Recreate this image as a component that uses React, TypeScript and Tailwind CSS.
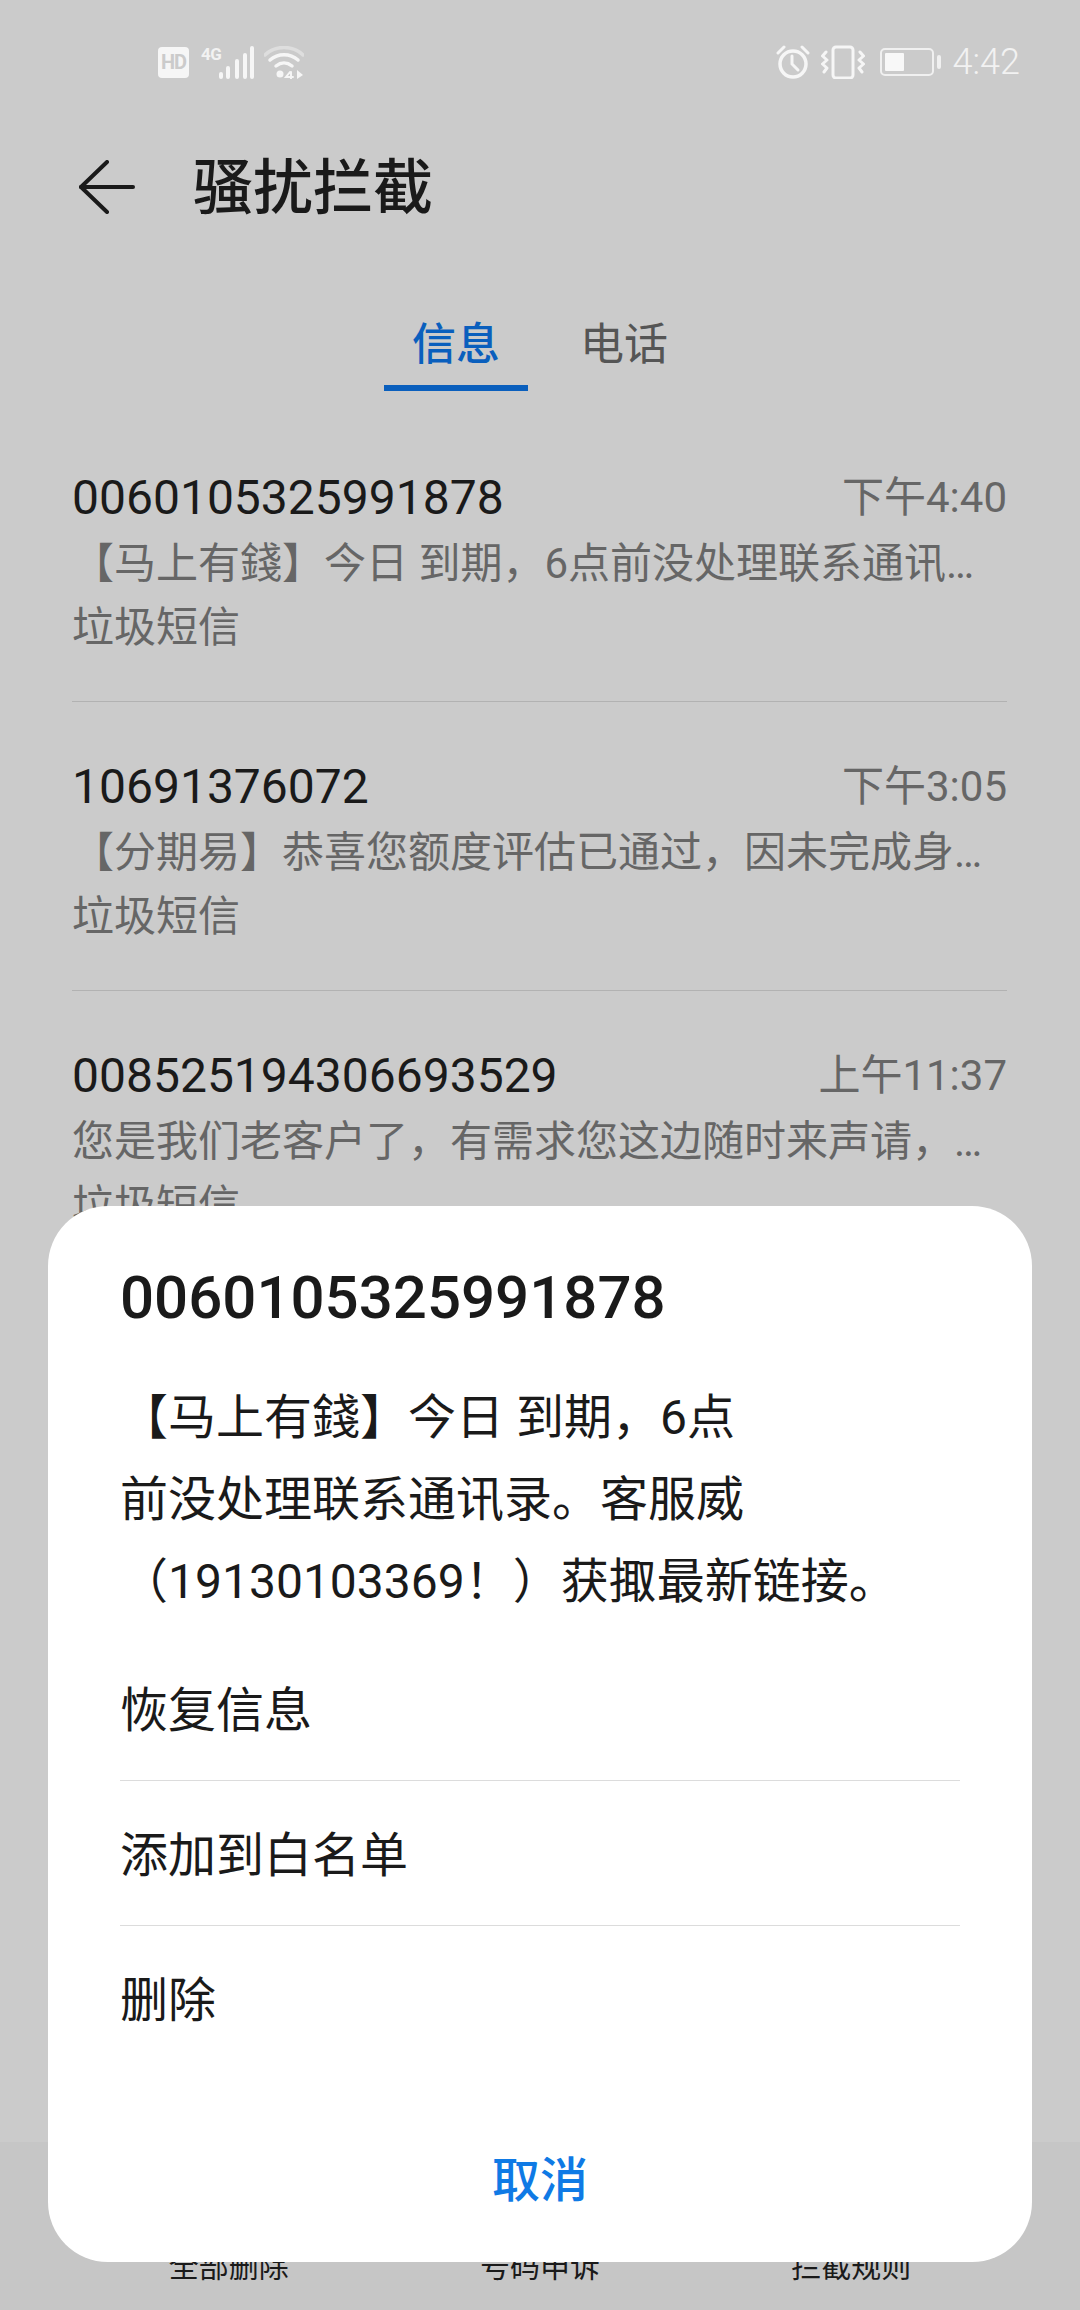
const rows = [
  {
    number: "0060105325991878",
    time: "下午4:40",
    preview: "【马上有錢】今日 到期，6点前没处理联系通讯…",
  },
  {
    number: "10691376072",
    time: "下午3:05",
    preview: "【分期易】恭喜您额度评估已通过，因未完成身…",
  },
  {
    number: "008525194306693529",
    time: "上午11:37",
    preview: "您是我们老客户了，有需求您这边随时来声请，…",
  },
];

function StatusBar() {
  return (
    <div className="flex h-[124px] items-center justify-between pl-[158px] pr-[60px]">
      <div className="flex items-center">
        <div className="flex h-[31px] w-[31px] items-center justify-center rounded-[4px] bg-[#f6f6f6] text-[20px] font-bold leading-none tracking-[-1px] text-[#cbcbcb]">
          HD
        </div>
        <div className="relative ml-[12px] h-[33px] w-[53px]">
          <span className="absolute left-0 top-[1px] text-[17px] font-bold leading-[14px] tracking-[-0.5px] text-[#f2f2f2]">4G</span>
          <svg className="absolute inset-0" width="53" height="33" viewBox="0 0 53 33" fill="#f6f6f6">
            <rect x="18" y="26" width="4" height="7" rx="2" />
            <rect x="25" y="20" width="4" height="13" rx="2" />
            <rect x="34" y="13" width="4" height="20" rx="2" />
            <rect x="42" y="7" width="4" height="26" rx="2" />
            <rect x="49" y="0" width="4" height="33" rx="2" />
          </svg>
        </div>
        <svg className="ml-[10px]" width="40" height="33" viewBox="0 0 40 33" fill="none" strokeLinecap="round">
          <path d="M1 9 C11 -1 29 -1 39 9" stroke="#dedede" strokeWidth="3.5" />
          <path d="M6 14 C14 7 26 7 34 14" stroke="#f6f6f6" strokeWidth="3.5" />
          <path d="M12 20 C17 16 23 16 28 20" stroke="#f6f6f6" strokeWidth="3.5" />
          <circle cx="16" cy="28" r="3.5" fill="#f6f6f6" />
          <path d="M26 26 L22 31 H29 M27 26 V33" stroke="#f6f6f6" strokeWidth="2" />
          <path d="M33 33 V24 L39 29 L33 33" fill="#f6f6f6" />
        </svg>
      </div>
      <div className="flex items-center">
        <svg width="34" height="34" viewBox="0 0 34 34" fill="none" stroke="#f6f6f6" strokeLinecap="round">
          <circle cx="17" cy="19" r="13" strokeWidth="3.5" />
          <path d="M16 11 V19 L22 25" strokeWidth="3" />
          <path d="M2 8 L8 2" strokeWidth="3" />
          <path d="M32 8 L26 2" strokeWidth="3" />
        </svg>
        <svg className="ml-[11px]" width="44" height="34" viewBox="0 0 44 34" fill="none" stroke="#f6f6f6" strokeLinecap="round" strokeLinejoin="round">
          <rect x="12" y="2" width="20" height="31" rx="3" strokeWidth="3" />
          <path d="M5 7 L1.5 11 L6 15 L1.5 19 L6 23 L3 27" strokeWidth="3" />
          <path d="M39 7 L42.5 11 L38 15 L42.5 19 L38 23 L41 27" strokeWidth="3" />
        </svg>
        <div className="ml-[15px] flex items-center">
          <div className="h-[28px] w-[54px] rounded-[5px] border-2 border-[#f0f0f0] p-[3px]">
            <div className="h-full w-[19px] rounded-[1px] bg-[#f8f8f8]" />
          </div>
          <div className="ml-[3px] h-[14px] w-[4px] rounded-[2px] bg-[#f0f0f0]" />
        </div>
        <span className="ml-[12px] text-[36px] font-light leading-none text-[#f2f2f2]">4:42</span>
      </div>
    </div>
  );
}

function MessageRow({ number, time, preview }: { number: string; time: string; preview: string }) {
  return (
    <div className="ml-[72px] mr-[73px] h-[289px] border-b-[1.5px] border-[#b2b2b2] pt-[55px]">
      <div className="flex h-[60px] items-center justify-between">
        <span className="text-[48px] leading-none text-[#1a1a1a]">{number}</span>
        <span className="text-[42px] leading-none text-[#666666]">{time}</span>
      </div>
      <p className="mt-[6px] h-[60px] whitespace-nowrap text-[42px] leading-[60px] text-[#666666]">{preview}</p>
      <p className="mt-[4px] text-[42px] leading-[60px] text-[#666666]">垃圾短信</p>
    </div>
  );
}

export default function App() {
  return (
    <div
      className="relative flex h-[2310px] w-[1080px] flex-col overflow-hidden bg-[#cbcbcb]"
      style={{ fontFamily: "Roboto, 'Noto Sans CJK SC', sans-serif" }}
    >
      <StatusBar />

      {/* Title */}
      <div className="flex h-[126px] items-center pl-[79px]">
        <svg width="56" height="54" viewBox="0 0 56 54" fill="none" stroke="#1a1a1a" strokeWidth="4" strokeLinecap="round" strokeLinejoin="round">
          <path d="M28 2 L2 27 L28 52" />
          <path d="M2 27 H54" />
        </svg>
        <h1 className="ml-[58px] pt-[3px] text-[60px] font-medium leading-none text-[#1a1a1a]">骚扰拦截</h1>
      </div>

      {/* Tabs */}
      <div className="mt-[63px] flex justify-center pr-[28px]">
        <div className="flex w-[144px] flex-col items-center">
          <span className="text-[44px] font-medium leading-[64px] text-[#0a5fbd]">信息</span>
          <div className="mt-[8px] h-[6px] w-full bg-[#0a5fbd]" />
        </div>
        <span className="ml-[52px] text-[44px] leading-[64px] text-[#555555]">电话</span>
      </div>

      <div className="mt-[22px]">
        {rows.map((row) => (
          <MessageRow key={row.number} {...row} />
        ))}
      </div>

      {/* Bottom bar behind the dialog */}
      <div className="mt-auto grid h-[168px] grid-cols-3 bg-[#c6c6c6] px-[73px] pt-[107px] text-center text-[30px] leading-[36px] text-[#1a1a1a]">
        <span>全部删除</span>
        <span>号码申诉</span>
        <span>拦截规则</span>
      </div>

      {/* Dialog */}
      <div className="absolute left-[48px] top-[1206px] flex h-[1056px] w-[984px] flex-col rounded-[60px] bg-white px-[72px]">
        <h2 className="mt-[57px] text-[60px] font-medium leading-[70px] text-[#1a1a1a]">0060105325991878</h2>
        <div className="mt-[44px] text-[48px] leading-[82px] text-[#1a1a1a]">
          <p>【马上有錢】今日 到期，6点</p>
          <p>前没处理联系通讯录。客服威</p>
          <p>（19130103369！）获掫最新链接。</p>
        </div>
        <div className="mt-[13px] text-[48px] text-[#1a1a1a]">
          <div className="flex h-[145px] items-center border-b-[1.5px] border-[#dcdcdc] pt-[5px]">恢复信息</div>
          <div className="flex h-[145px] items-center border-b-[1.5px] border-[#dcdcdc] pt-[5px]">添加到白名单</div>
          <div className="flex h-[145px] items-center pt-[5px]">删除</div>
        </div>
        <div className="mt-auto flex h-[160px] justify-center pt-[44px] text-[48px] font-medium leading-[70px] text-[#0f7ae5]">
          取消
        </div>
      </div>
    </div>
  );
}
